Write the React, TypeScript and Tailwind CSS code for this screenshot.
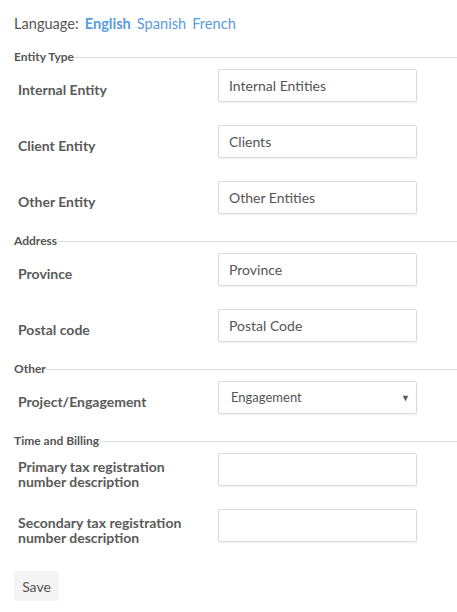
import React from 'react';

type Field = { label: string; value?: string; select?: boolean };

const sections: { title: string; fields: Field[] }[] = [
  {
    title: 'Entity Type',
    fields: [
      { label: 'Internal Entity', value: 'Internal Entities' },
      { label: 'Client Entity', value: 'Clients' },
      { label: 'Other Entity', value: 'Other Entities' },
    ],
  },
  {
    title: 'Address',
    fields: [
      { label: 'Province', value: 'Province' },
      { label: 'Postal code', value: 'Postal Code' },
    ],
  },
  {
    title: 'Other',
    fields: [{ label: 'Project/Engagement', value: 'Engagement', select: true }],
  },
  {
    title: 'Time and Billing',
    fields: [
      { label: 'Primary tax registration number description', value: '' },
      { label: 'Secondary tax registration number description', value: '' },
    ],
  },
];

function Row({ field }: { field: Field }) {
  return (
    <div className="flex items-start">
      <div className="w-[204px] h-[41px] pl-1 pr-3 flex items-center">
        <span className="text-[14px] leading-[15px] font-bold text-[#5a5a5a]">{field.label}</span>
      </div>
      {field.select ? (
        <div className="w-[199px] h-[33px] border border-[#dcdcdc] rounded-[2px] shadow-[0_1px_2px_rgba(0,0,0,0.08)] flex items-center justify-between pl-3 pr-[6px] text-[13px] text-[#555]">
          <span>{field.value}</span>
          <span className="text-[9px] text-[#555]">▼</span>
        </div>
      ) : (
        <input
          readOnly
          value={field.value}
          className="w-[199px] h-[33px] border border-[#dcdcdc] rounded-[2px] shadow-[0_1px_2px_rgba(0,0,0,0.08)] px-[10px] text-[14px] text-[#555] outline-none"
        />
      )}
    </div>
  );
}

export default function App() {
  return (
    <div className="bg-white w-[457px] min-h-[612px] pl-[14px] pt-[14px] font-['Lato','Liberation_Sans',sans-serif] text-[#555]">
      <div className="h-[20px] flex items-center text-[14.6px] gap-[6px]">
        <span>Language:</span>
        <a className="font-bold text-[#5b9be0]">English</a>
        <a className="text-[#5b9be0]">Spanish</a>
        <a className="text-[#5b9be0]">French</a>
      </div>

      <div className="mt-[16px]">
        {sections.map((s, i) => (
          <div key={s.title} className={i > 0 ? 'mt-[12px]' : ''}>
            <div className="flex items-center h-[14px]">
              <span className="text-[12px] font-bold text-[#555] leading-none">{s.title}</span>
              <div className="flex-1 border-t border-[#dddddd]" />
            </div>
            <div className="mt-[5px] flex flex-col gap-[15px]">
              {s.fields.map((f) => (
                <Row key={f.label} field={f} />
              ))}
            </div>
          </div>
        ))}
      </div>

      <button className="mt-[21px] w-[45px] h-[30px] bg-[#f4f4f4] rounded-[3px] text-[14px] text-[#555]">
        Save
      </button>
    </div>
  );
}
